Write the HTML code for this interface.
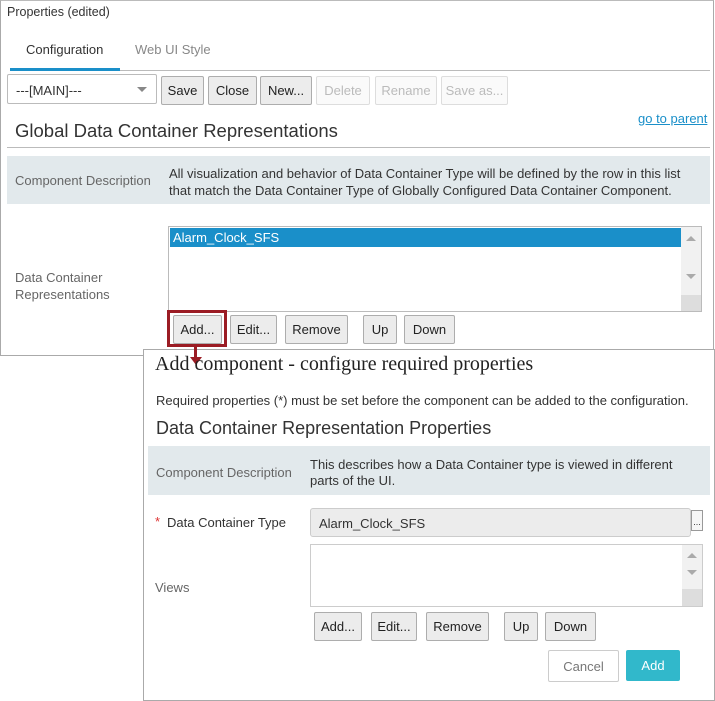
<!DOCTYPE html>
<html><head><style>
*{box-sizing:border-box;margin:0;padding:0}
body{width:715px;height:701px;background:#fff;font-family:"Liberation Sans",sans-serif;font-size:13px;color:#333;position:relative;overflow:hidden}
.a{position:absolute;white-space:nowrap}
.btn{position:absolute;border:1px solid #adadad;background:#ececec;border-radius:2px;font-size:13px;color:#222;display:flex;align-items:center;justify-content:center}
.dis{color:#bbb;border-color:#ddd;background:#fafafa}
.band{position:absolute;background:#e2e9ec}
.lbl{color:#666}
</style></head><body>
<div class="a" style="left:0;top:0;width:714px;height:356px;border:1px solid #aaa;border-top-color:#bbb"></div>
<div class="a" style="left:7px;top:5px;font-size:12.5px;color:#333">Properties (edited)</div>
<div class="a" style="left:26px;top:42px;font-size:13px;color:#333">Configuration</div>
<div class="a" style="left:135px;top:42px;font-size:13px;color:#888">Web UI Style</div>
<div class="a" style="left:10px;top:70px;width:700px;height:1px;background:#bbb"></div>
<div class="a" style="left:10px;top:68px;width:110px;height:3px;background:#1a8fc9"></div>
<div class="a" style="left:7px;top:74px;width:150px;height:30px;border:1px solid #bbb;border-radius:2px;padding:8px 0 0 8px;font-size:13px">---[MAIN]---</div>
<div class="a" style="left:137px;top:87px;width:0;height:0;border-left:5px solid transparent;border-right:5px solid transparent;border-top:5px solid #888"></div>
<div class="btn" style="left:161px;top:76px;width:43px;height:29px">Save</div>
<div class="btn" style="left:208px;top:76px;width:49px;height:29px">Close</div>
<div class="btn" style="left:260px;top:76px;width:52px;height:29px">New...</div>
<div class="btn dis" style="left:316px;top:76px;width:54px;height:29px">Delete</div>
<div class="btn dis" style="left:375px;top:76px;width:62px;height:29px">Rename</div>
<div class="btn dis" style="left:441px;top:76px;width:67px;height:29px">Save as...</div>
<div class="a" style="left:638px;top:111px;font-size:13px;color:#1a8fc9;text-decoration:underline">go to parent</div>
<div class="a" style="left:15px;top:120px;font-size:18.5px;color:#333">Global Data Container Representations</div>
<div class="a" style="left:7px;top:147px;width:703px;height:1px;background:#bbb"></div>
<div class="band" style="left:7px;top:156px;width:703px;height:48px"></div>
<div class="a lbl" style="left:15px;top:173px">Component Description</div>
<div class="a" style="left:169px;top:165px;line-height:17px">All visualization and behavior of Data Container Type will be defined by the row in this list<br>that match the Data Container Type of Globally Configured Data Container Component.</div>
<div class="a lbl" style="left:15px;top:269px;line-height:17px">Data Container<br>Representations</div>
<div class="a" style="left:168px;top:226px;width:534px;height:86px;border:1px solid #bbb"></div>
<div class="a" style="left:170px;top:228px;width:511px;height:19px;background:#1a8fc9;color:#fff;padding:2px 0 0 3px">Alarm_Clock_SFS</div>
<div class="a" style="left:681px;top:227px;width:20px;height:84px;background:#f1f1f1"></div>
<div class="a" style="left:681px;top:295px;width:20px;height:16px;background:#ddd"></div>
<div class="a" style="left:686px;top:236px;border-left:5px solid transparent;border-right:5px solid transparent;border-bottom:5px solid #aaa"></div>
<div class="a" style="left:686px;top:274px;border-left:5px solid transparent;border-right:5px solid transparent;border-top:5px solid #aaa"></div>
<div class="a" style="left:167px;top:310px;width:60px;height:37px;border:3px solid #9b1c24"></div>
<div class="btn" style="left:173px;top:315px;width:49px;height:29px">Add...</div>
<div class="btn" style="left:230px;top:315px;width:47px;height:29px">Edit...</div>
<div class="btn" style="left:285px;top:315px;width:63px;height:29px">Remove</div>
<div class="btn" style="left:363px;top:315px;width:34px;height:29px">Up</div>
<div class="btn" style="left:404px;top:315px;width:51px;height:29px">Down</div>
<div class="a" style="left:143px;top:349px;width:572px;height:352px;border:1px solid #aaa;background:#fff"></div>
<div class="a" style="left:194px;top:347px;width:3px;height:12px;background:#9b1c24"></div>
<div class="a" style="left:190px;top:357px;border-left:6px solid transparent;border-right:6px solid transparent;border-top:8px solid #9b1c24"></div>
<div class="a" style="left:155px;top:353px;font-family:'Liberation Serif',serif;font-size:20px;color:#222">Add component - configure required properties</div>
<div class="a" style="left:156px;top:393px">Required properties (*) must be set before the component can be added to the configuration.</div>
<div class="a" style="left:156px;top:418px;font-size:18px;color:#333">Data Container Representation Properties</div>
<div class="band" style="left:148px;top:446px;width:562px;height:49px"></div>
<div class="a lbl" style="left:156px;top:465px">Component Description</div>
<div class="a" style="left:310px;top:457px;line-height:16px">This describes how a Data Container type is viewed in different<br>parts of the UI.</div>
<div class="a" style="left:155px;top:514px;color:#d33">*</div>
<div class="a" style="left:167px;top:515px;color:#333">Data Container Type</div>
<div class="a" style="left:310px;top:508px;width:381px;height:29px;border:1px solid #ccc;border-radius:3px;background:#ececec;padding:7px 0 0 8px">Alarm_Clock_SFS</div>
<div class="a" style="left:691px;top:510px;width:12px;height:21px;border:1px solid #999;background:#f6f6f6;font-size:9px;text-align:center;line-height:22px">...</div>
<div class="a lbl" style="left:155px;top:580px">Views</div>
<div class="a" style="left:310px;top:544px;width:393px;height:63px;border:1px solid #ccc"></div>
<div class="a" style="left:682px;top:545px;width:20px;height:61px;background:#f1f1f1"></div>
<div class="a" style="left:682px;top:589px;width:20px;height:17px;background:#ddd"></div>
<div class="a" style="left:687px;top:553px;border-left:5px solid transparent;border-right:5px solid transparent;border-bottom:5px solid #aaa"></div>
<div class="a" style="left:687px;top:570px;border-left:5px solid transparent;border-right:5px solid transparent;border-top:5px solid #aaa"></div>
<div class="btn" style="left:314px;top:612px;width:48px;height:29px">Add...</div>
<div class="btn" style="left:371px;top:612px;width:46px;height:29px">Edit...</div>
<div class="btn" style="left:426px;top:612px;width:63px;height:29px">Remove</div>
<div class="btn" style="left:504px;top:612px;width:34px;height:29px">Up</div>
<div class="btn" style="left:545px;top:612px;width:51px;height:29px">Down</div>
<div class="btn" style="left:548px;top:650px;width:71px;height:32px;background:#fff;border-color:#ccc;color:#777">Cancel</div>
<div class="btn" style="left:626px;top:650px;width:54px;height:31px;background:#31b8cb;border-color:#31b8cb;color:#fff">Add</div>
</body></html>
